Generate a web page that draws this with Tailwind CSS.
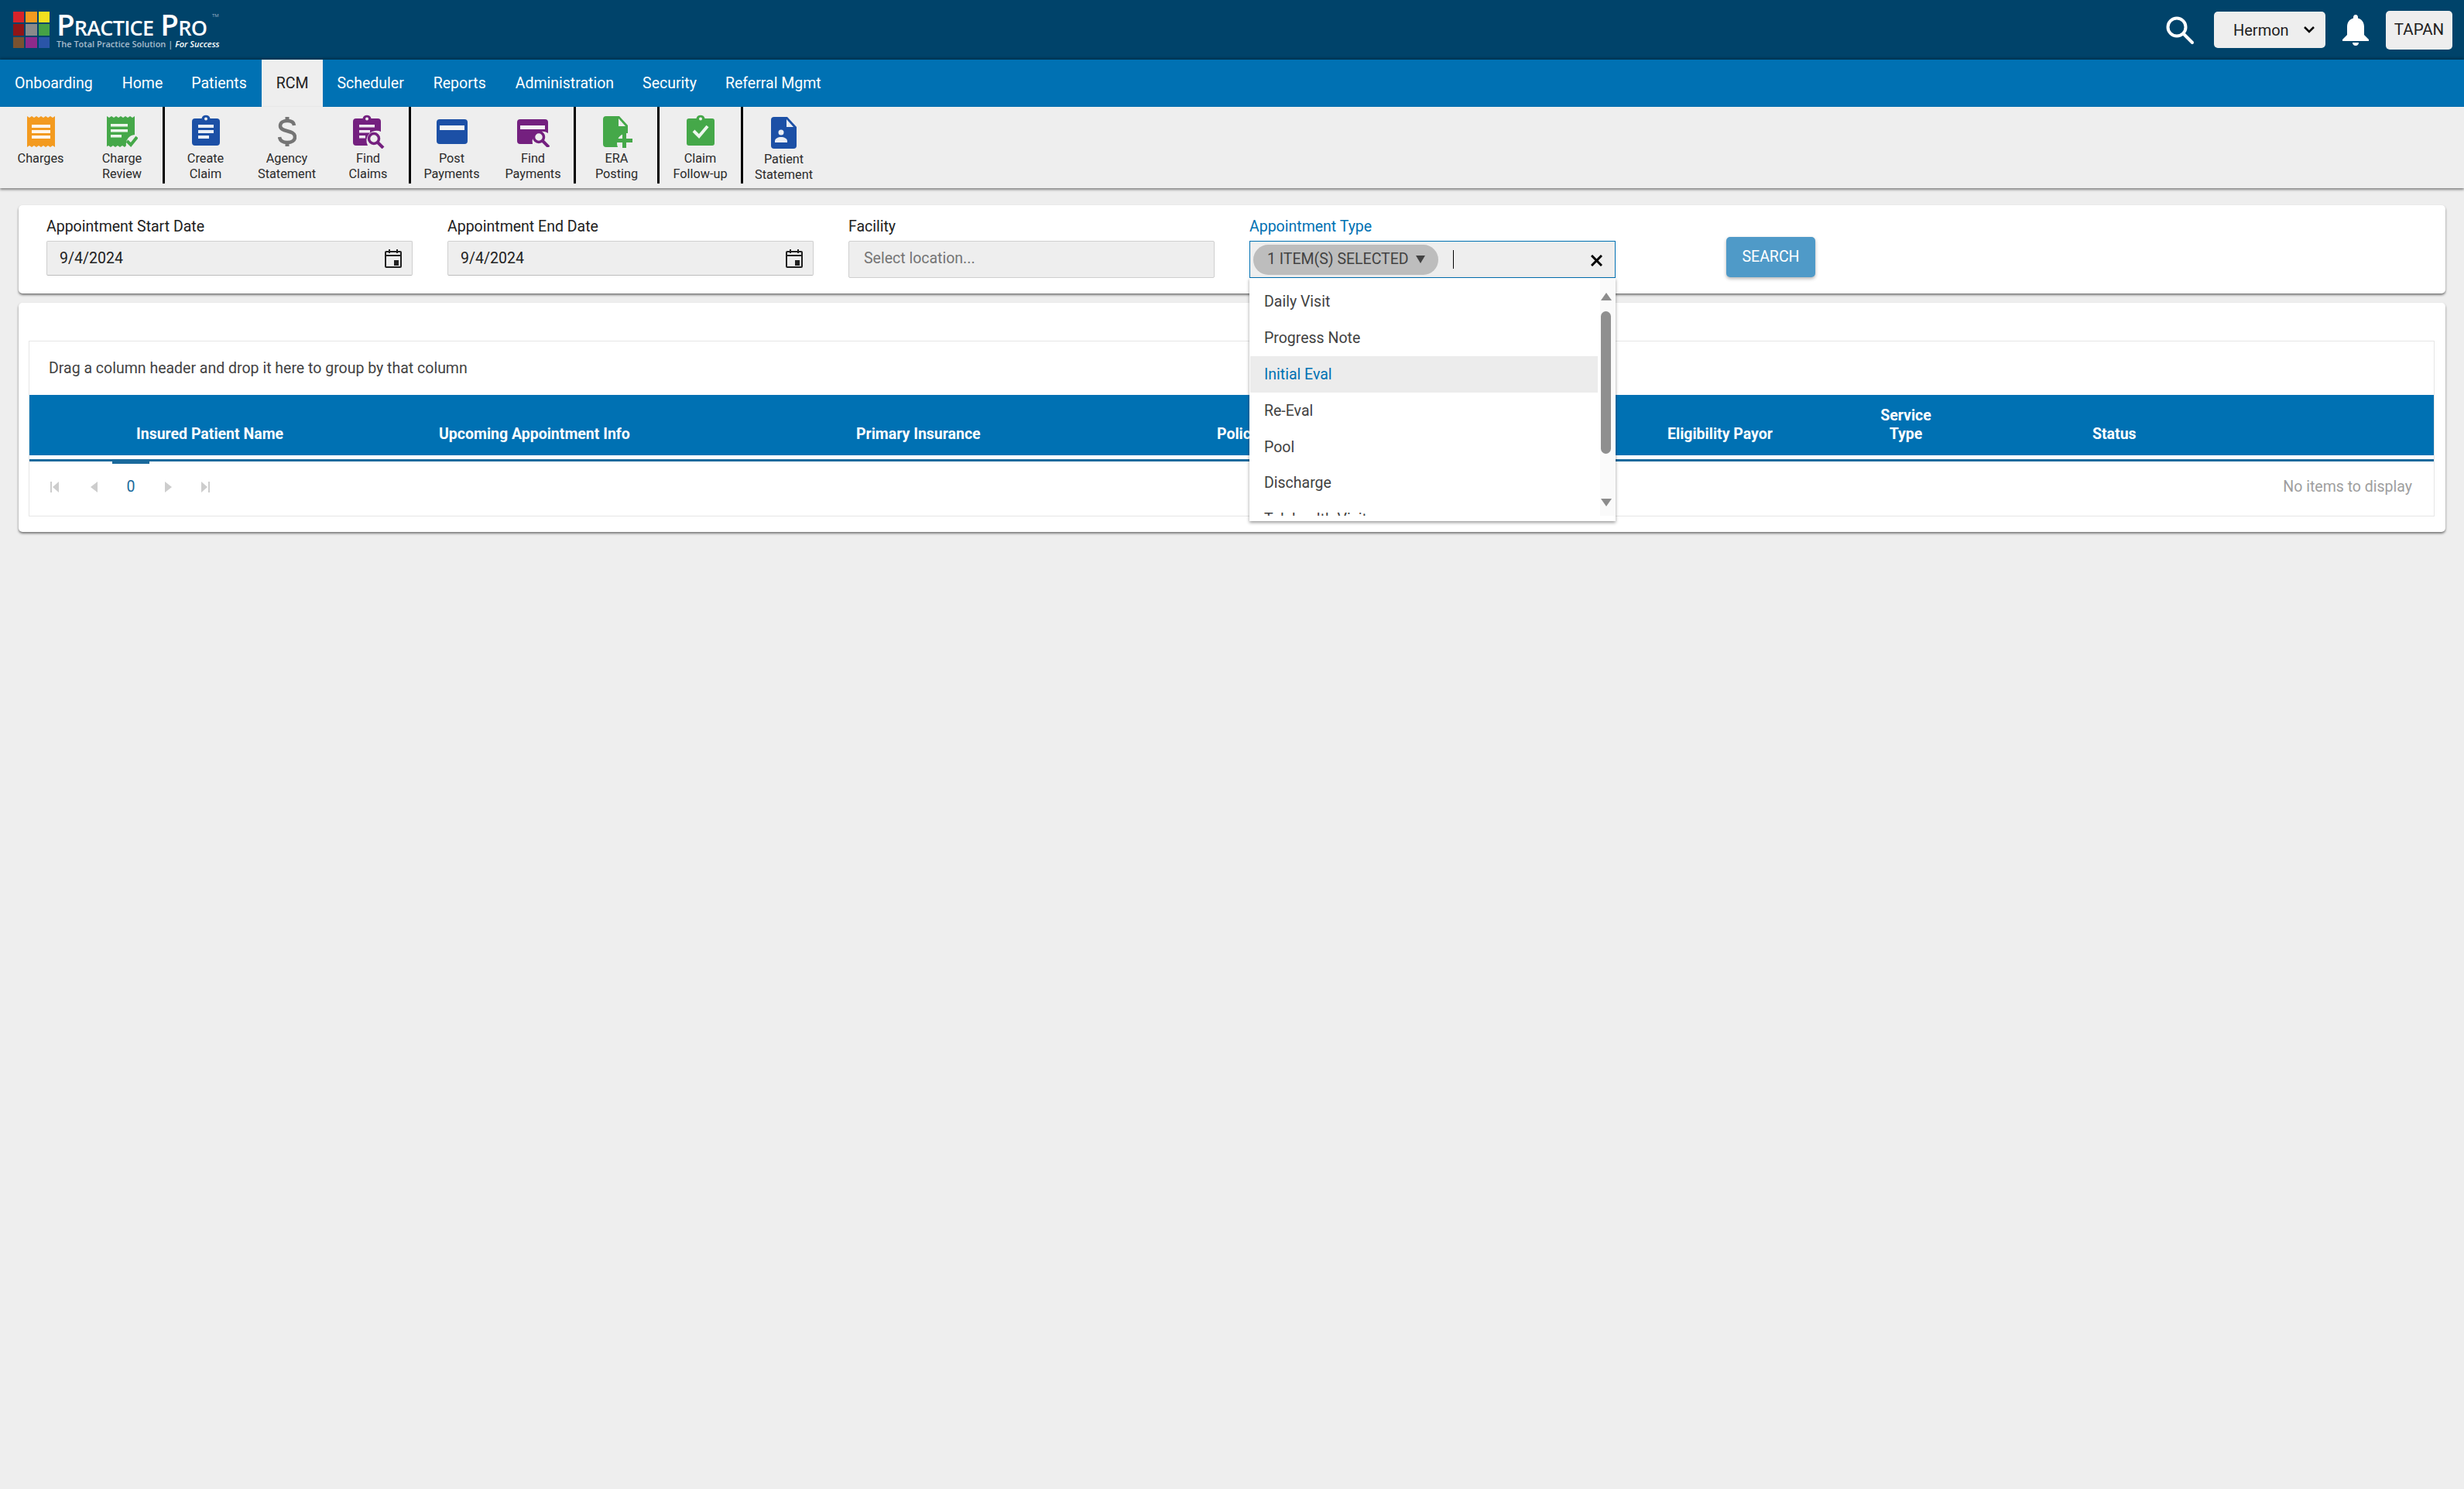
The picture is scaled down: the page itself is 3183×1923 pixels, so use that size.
<!doctype html>
<html lang="en">
<head>
<meta charset="utf-8">
<title>Practice Pro</title>
<script src="https://cdn.jsdelivr.net/npm/@tailwindcss/browser@4"></script>
</head>
<body class="bg-[#eeeeee] font-['Roboto',sans-serif] text-[#212121] w-[3183px] h-[1923px] overflow-hidden">

<header class="h-[77px] bg-[#00436a] flex items-center justify-between pl-[17px] pr-[15px]">
  <div class="flex items-start gap-[9px] h-[47px]">
    <div class="grid grid-cols-3 grid-rows-3 gap-[2px] w-[47px] h-[47px]">
      <div class="bg-[#d8232a]"></div><div class="bg-[#f39a1f]"></div><div class="bg-[#f2e01f]"></div>
      <div class="bg-[#8f1517]"></div><div class="bg-[#8a8a8a]"></div><div class="bg-[#45a146]"></div>
      <div class="bg-[#7a5230]"></div><div class="bg-[#8e2a8b]"></div><div class="bg-[#2a55a8]"></div>
    </div>
    <div class="relative w-[220px] h-[47px] text-white font-['Open_Sans',sans-serif]">
      <div class="absolute left-0 top-[0px] text-[38.500px] leading-[32px] font-semibold [font-variant:small-caps] tracking-[-0.8px] whitespace-nowrap">Practice Pro</div>
      <div class="absolute left-[201px] top-[1px] text-[6px] leading-[8px] text-[#9fb4c6]">TM</div>
      <div class="absolute left-0 top-[35px] text-[11px] leading-[13px] text-[#a9bdce] font-semibold whitespace-nowrap">The Total Practice Solution | <i class="text-white">For Success</i></div>
    </div>
  </div>
  <div class="flex items-center">
    <svg class="w-[38px] h-[38px] mr-[25px]" viewBox="0 0 38 38" fill="none" stroke="#ffffff" stroke-width="4" stroke-linecap="round"><circle cx="15" cy="15" r="11.5"/><path d="M24 24l11 11"/></svg>
    <div class="relative w-[144px] h-[47px]">
      <select class="appearance-none w-full h-full bg-[#eeeeee] rounded-[5px] pl-[25px] text-[20px] font-['Roboto',sans-serif] text-[#212121]"><option>Hermon</option></select>
      <svg class="absolute right-[14px] top-[18px] w-[14px] h-[10px] pointer-events-none" viewBox="0 0 14 10" fill="none" stroke="#000" stroke-width="2.500"><path d="M1 2l6 6 6-6"/></svg>
    </div>
    <svg class="w-[36px] h-[42px] ml-[21px]" viewBox="0 0 36 42" fill="#ffffff"><path d="M18 1c-2 0-3 1.500-3 3.500v1C9.500 7 7 11.500 7 17v10l-6 6v2h34v-2l-6-6V17c0-5.500-2.500-10-8-11.500v-1C21 2.500 20 1 18 1z"/><path d="M14 37h8c0 2.500-1.800 4-4 4s-4-1.500-4-4z"/></svg>
    <button class="w-[86px] h-[50px] ml-[21px] bg-[#eeeeee] rounded-[5px] text-[20.500px] text-[#212121]">TAPAN</button>
  </div>
</header>

<nav class="h-[61px] bg-[#0071b3] flex text-[19.500px] text-white shadow-[0_-2px_3px_rgba(0,0,0,0.25)] relative">
  <a class="pl-[19px] pr-[19px] flex items-center">Onboarding</a>
  <a class="pl-[19px] pr-[18px] flex items-center">Home</a>
  <a class="px-[19px] flex items-center">Patients</a>
  <a class="px-[19px] flex items-center bg-[#eeeeee] text-[#212121]">RCM</a>
  <a class="pl-[18px] pr-[19px] flex items-center">Scheduler</a>
  <a class="px-[19px] flex items-center">Reports</a>
  <a class="px-[19px] flex items-center">Administration</a>
  <a class="px-[18px] flex items-center">Security</a>
  <a class="px-[19px] flex items-center">Referral Mgmt</a>
</nav>

<section class="h-[105px] bg-[#eeeeee] shadow-[0_2px_3px_rgba(0,0,0,0.45)] relative flex items-start text-[16.250px] leading-[20px] text-[#2b2b2b] text-center">
  <div class="flex h-[99px] border-r-[3px] border-black">
    <div class="w-[105px] flex flex-col items-center">
      <svg class="w-[36px] h-[40px] mt-[12px]" viewBox="0 0 36 40"><path fill="#f39a1f" d="M0 0l3 2 3-2 3 2 3-2 3 2 3-2 3 2 3-2 3 2 3-2 3 2 3-2v40l-3-2-3 2-3-2-3 2-3-2-3 2-3-2-3 2-3-2-3 2-3-2-3 2z"/><path fill="#fff" fill-opacity=".9" d="M6 11h24v4H6zM6 18h24v4H6zM6 25h24v4H6z"/></svg>
      <span class="mt-[5px]">Charges</span>
    </div>
    <div class="w-[105px] flex flex-col items-center">
      <svg class="w-[40px] h-[40px] mt-[12px]" viewBox="0 0 40 40"><path fill="#45a849" d="M0 0l3 2 3-2 3 2 3-2 3 2 3-2 3 2 3-2 3 2 3-2 3 2 3-2v24a12 12 0 0 0-11 14l-2 2-3-2-3 2-3-2-3 2-3-2-3 2-3-2-3 2z"/><path fill="#fff" fill-opacity=".9" d="M5 10h22v3.500H5zM5 17h22v3.500H5zM5 24h14v3.500H5z"/><path fill="none" stroke="#45a849" stroke-width="4" d="M26 32l5 5 8-10"/></svg>
      <span class="mt-[5px]">Charge<br>Review</span>
    </div>
  </div>
  <div class="flex h-[99px] border-r-[3px] border-black">
    <div class="w-[105px] flex flex-col items-center">
      <svg class="w-[36px] h-[40px] mt-[10px]" viewBox="0 0 36 40"><path fill="#1c50a6" d="M4 5h8.500a5.700 5.700 0 0 1 11 0H32a4 4 0 0 1 4 4v27a4 4 0 0 1-4 4H4a4 4 0 0 1-4-4V9a4 4 0 0 1 4-4z"/><circle cx="18" cy="5.500" r="2" fill="#eee"/><path fill="#fff" fill-opacity=".9" d="M8 13h20v4H8zM8 20h20v4H8zM8 27h14v4H8z"/></svg>
      <span class="mt-[7px]">Create<br>Claim</span>
    </div>
    <div class="w-[105px] flex flex-col items-center">
      <svg class="w-[24px] h-[38px] mt-[13px]" viewBox="0 0 24 38" fill="none" stroke="#757575" stroke-width="4.500"><path d="M21 11c-.3-4-3.500-6-9-6-5 0-9 2.300-9 6.500 0 9 19 4.500 19 14.500 0 4.500-4 7-10 7-5.500 0-9.300-2.500-10-7"/><path d="M12 0v6M12 32v6" stroke-width="5"/></svg>
      <span class="mt-[6px]">Agency<br>Statement</span>
    </div>
    <div class="w-[105px] flex flex-col items-center">
      <svg class="w-[41px] h-[44px] mt-[10px] translate-x-[1px]" viewBox="0 0 41 44"><path fill="#74207f" d="M4 5h8.500a5.700 5.700 0 0 1 11 0H32a4 4 0 0 1 4 4v13a13 13 0 0 0-17 18H4a4 4 0 0 1-4-4V9a4 4 0 0 1 4-4z"/><circle cx="18" cy="5.500" r="2" fill="#eee"/><path fill="#fff" fill-opacity=".9" d="M8 13h20v3.500H8zM8 20h14v3.500H8zM8 27h8v3.500H8z"/><circle cx="27" cy="31" r="6.500" fill="none" stroke="#74207f" stroke-width="3.500"/><path d="M32 36l7 7" stroke="#74207f" stroke-width="4"/></svg>
      <span class="mt-[3px]">Find<br>Claims</span>
    </div>
  </div>
  <div class="flex h-[99px] border-r-[3px] border-black">
    <div class="w-[105px] flex flex-col items-center">
      <svg class="w-[40px] h-[32px] mt-[16px]" viewBox="0 0 40 32"><rect width="40" height="32" rx="4" fill="#1c50a6"/><rect x="4" y="8" width="32" height="6" fill="#f4f4f4"/></svg>
      <span class="mt-[9px]">Post<br>Payments</span>
    </div>
    <div class="w-[105px] flex flex-col items-center">
      <svg class="w-[42px] h-[36px] mt-[16px]" viewBox="0 0 42 36"><path fill="#74207f" d="M4 0h32a4 4 0 0 1 4 4v14a13 13 0 0 0-20 14H4a4 4 0 0 1-4-4V4a4 4 0 0 1 4-4z"/><rect x="4" y="8" width="32" height="5" fill="#f4f4f4"/><circle cx="28" cy="23" r="6.500" fill="none" stroke="#74207f" stroke-width="3.500"/><path d="M33 28l8 8" stroke="#74207f" stroke-width="4"/></svg>
      <span class="mt-[5px]">Find<br>Payments</span>
    </div>
  </div>
  <div class="flex h-[99px] border-r-[3px] border-black">
    <div class="w-[105px] flex flex-col items-center">
      <svg class="w-[38px] h-[41px] mt-[12px] translate-x-[1px]" viewBox="0 0 38 41"><path fill="#45a849" d="M4 0h17l11 12v10a13 13 0 0 0-13 18H4a4 4 0 0 1-4-4V4a4 4 0 0 1 4-4z"/><path fill="#eee" d="M20 3l9 10h-9z"/><path fill="#45a849" d="M25 21h5v8h8v5h-8v7h-5v-7h-7v-5h7z"/></svg>
      <span class="mt-[4px]">ERA<br>Posting</span>
    </div>
  </div>
  <div class="flex h-[99px] border-r-[3px] border-black">
    <div class="w-[105px] flex flex-col items-center">
      <svg class="w-[36px] h-[40px] mt-[10px]" viewBox="0 0 36 40"><path fill="#45a849" d="M3 5h9.500a5.700 5.700 0 0 1 11 0H33a3 3 0 0 1 3 3v29a3 3 0 0 1-3 3H3a3 3 0 0 1-3-3V8a3 3 0 0 1 3-3z"/><circle cx="18" cy="5.500" r="2" fill="#eee"/><path fill="none" stroke="#fff" stroke-opacity=".9" stroke-width="4" d="M9 21l7 7 11-13"/></svg>
      <span class="mt-[7px]">Claim<br>Follow-up</span>
    </div>
  </div>
  <div class="flex h-[99px]">
    <div class="w-[105px] flex flex-col items-center">
      <svg class="w-[33px] h-[41px] mt-[13px]" viewBox="0 0 33 41"><path fill="#1c50a6" d="M4 0h17l12 13v24a4 4 0 0 1-4 4H4a4 4 0 0 1-4-4V4a4 4 0 0 1 4-4z"/><path fill="#e9edf4" d="M20 3l9 10h-9z"/><circle cx="13" cy="20" r="3.500" fill="#e9edf4"/><path fill="#e9edf4" d="M5 33v-2c0-3 4-5 8-5s8 2 8 5v2z"/></svg>
      <span class="mt-[4px]">Patient<br>Statement</span>
    </div>
  </div>
</section>

<main class="pt-[22px] pl-[24px] pr-[24px] relative">
  <section class="relative z-10 h-[114px] bg-white rounded-[5px] shadow-[0_2px_3px_rgba(0,0,0,0.5)] pl-[36px] pt-[15px] flex text-[19.500px] leading-[24px]">
    <div class="w-[473px] mr-[45px]">
      <div class="h-[31px] pt-px text-[#212121]">Appointment Start Date</div>
      <div class="h-[45px] flex items-center justify-between bg-[#eeeeee] border border-[#cfcfcf] rounded-[2px] pl-[16px] pr-[13px] border-b-[#bdbdbd]">
        <span class="pt-px">9/4/2024</span>
        <svg class="w-[22px] h-[24px]" viewBox="0 0 22 24" fill="none" stroke="#212121" stroke-width="2"><rect x="1" y="3" width="20" height="20" rx="1"/><path d="M1 8h20M6 0v5M16 0v5"/><rect x="12" y="14" width="6" height="7" fill="#212121" stroke="none"/></svg>
      </div>
    </div>
    <div class="w-[473px] mr-[45px]">
      <div class="h-[31px] pt-px text-[#212121]">Appointment End Date</div>
      <div class="h-[45px] flex items-center justify-between bg-[#eeeeee] border border-[#cfcfcf] rounded-[2px] pl-[16px] pr-[13px] border-b-[#bdbdbd]">
        <span class="pt-px">9/4/2024</span>
        <svg class="w-[22px] h-[24px]" viewBox="0 0 22 24" fill="none" stroke="#212121" stroke-width="2"><rect x="1" y="3" width="20" height="20" rx="1"/><path d="M1 8h20M6 0v5M16 0v5"/><rect x="12" y="14" width="6" height="7" fill="#212121" stroke="none"/></svg>
      </div>
    </div>
    <div class="w-[473px] mr-[45px]">
      <div class="h-[31px] pt-px text-[#212121]">Facility</div>
      <div class="h-[48px] flex items-center bg-[#eeeeee] border border-[#cfcfcf] rounded-[2px] pl-[19px] pb-[2px] text-[#757575]">Select location...</div>
    </div>
    <div class="w-[473px] relative">
      <div class="h-[31px] pt-px text-[#0071b3]">Appointment Type</div>
      <div class="h-[48px] flex items-center bg-[#eeeeee] border border-[#0071b3] pl-[4px] pr-[16px]">
        <span class="h-[39px] w-[239px] rounded-full bg-[#bdbdbd] flex items-center pl-[18px] text-[#424242] whitespace-nowrap">1 ITEM(S) SELECTED<svg class="ml-[9px] w-[12px] h-[10px]" viewBox="0 0 12 10" fill="#424242"><path d="M0 0h12L6 10z"/></svg></span>
        <span class="ml-[19px] w-px h-[24px] bg-black"></span>
        <svg class="ml-auto mt-[2px] w-[15px] h-[15px]" viewBox="0 0 15 15" stroke="#000" stroke-width="3"><path d="M1 1l13 13M14 1L1 14"/></svg>
      </div>
      <div class="absolute z-20 left-0 top-[79px] w-[473px] h-[314px] bg-white shadow-[0_2px_4px_rgba(0,0,0,0.4)] overflow-hidden">
        <div class="w-[449px] ml-px pt-[7px] text-[#424242]">
          <div class="h-[47px] pl-[18px] flex items-center">Daily Visit</div>
          <div class="h-[47px] pl-[18px] flex items-center">Progress Note</div>
          <div class="h-[47px] pl-[18px] flex items-center bg-[#ececec] text-[#0071b3]">Initial Eval</div>
          <div class="h-[47px] pl-[18px] flex items-center">Re-Eval</div>
          <div class="h-[47px] pl-[18px] flex items-center">Pool</div>
          <div class="h-[46px] pl-[18px] flex items-center">Discharge</div>
          <div class="h-[47px] pl-[18px] flex items-center">Telehealth Visit</div>
        </div>
        <div class="absolute right-0 top-0 w-[20px] h-full bg-[#fafafa]"></div>
        <div class="absolute left-[454px] top-[19px] w-0 h-0 border-x-[7px] border-x-transparent border-b-[10px] border-b-[#8c8c8c]"></div>
        <div class="absolute left-[454px] top-[43px] w-[13px] h-[184px] rounded-full bg-[#8f8f8f]"></div>
        <div class="absolute left-[454px] top-[285px] w-0 h-0 border-x-[7px] border-x-transparent border-t-[10px] border-t-[#8c8c8c]"></div>
        <div class="absolute left-0 bottom-0 w-full h-[7px] bg-white"></div>
      </div>
    </div>
    <button class="absolute left-[2206px] top-[41px] w-[115px] h-[52px] rounded-[5px] bg-[#4f9ac8] text-white text-[19.500px] shadow-[0_2px_4px_rgba(0,0,0,0.3)]">SEARCH</button>
  </section>

  <section class="mt-[12px] h-[296px] bg-white rounded-[5px] shadow-[0_2px_3px_rgba(0,0,0,0.5)] pt-[49px] pl-[13px] pr-[14px]">
    <div class="h-[227px] border border-[#e6e6e6]">
      <div class="h-[69px] flex items-center pl-[25px] text-[19.500px] text-[#424242]">Drag a column header and drop it here to group by that column</div>
      <div class="h-[78px] bg-[#0071b3] flex items-end pb-[15px] text-white font-bold text-[19.500px] leading-[24px] whitespace-nowrap">
        <div class="w-[138px]"></div>
        <div class="w-[391px]">Insured Patient Name</div>
        <div class="w-[539px]">Upcoming Appointment Info</div>
        <div class="w-[466px]">Primary Insurance</div>
        <div class="w-[582px]">Policy Number</div>
        <div class="w-[246px]">Eligibility Payor</div>
        <div class="w-[124px] text-center">Service<br>Type</div>
        <div class="ml-[179px]">Status</div>
      </div>
      <div class="h-[5px]"></div>
      <div class="h-[3px] bg-[#1a6a9c]"></div>
      <div class="w-[48px] h-[3px] ml-[107px] bg-[#1a6a9c]"></div>
      <div class="h-[60px] flex items-center pl-[8px] pr-[28px] text-[19.500px]">
        <div class="w-[48px] flex justify-center"><svg class="w-[11px] h-[14px]" viewBox="0 0 11 14" fill="#cdcdcd"><path d="M0 0h2v14H0zM11 0v14L3 7z"/></svg></div>
        <div class="w-[48px] ml-[3px] flex justify-center"><svg class="w-[9px] h-[14px]" viewBox="0 0 9 14" fill="#cdcdcd"><path d="M9 0v14L0 7z"/></svg></div>
        <span class="w-[48px] text-center text-[#1a6a9c]">0</span>
        <div class="w-[48px] flex justify-center"><svg class="w-[9px] h-[14px]" viewBox="0 0 9 14" fill="#cdcdcd"><path d="M0 0v14l9-7z"/></svg></div>
        <div class="w-[48px] flex justify-center"><svg class="w-[11px] h-[14px]" viewBox="0 0 11 14" fill="#cdcdcd"><path d="M9 0h2v14H9zM0 0v14l8-7z"/></svg></div>
        <span class="ml-auto text-[#9e9e9e]">No items to display</span>
      </div>
    </div>
  </section>
</main>
</body>
</html>
